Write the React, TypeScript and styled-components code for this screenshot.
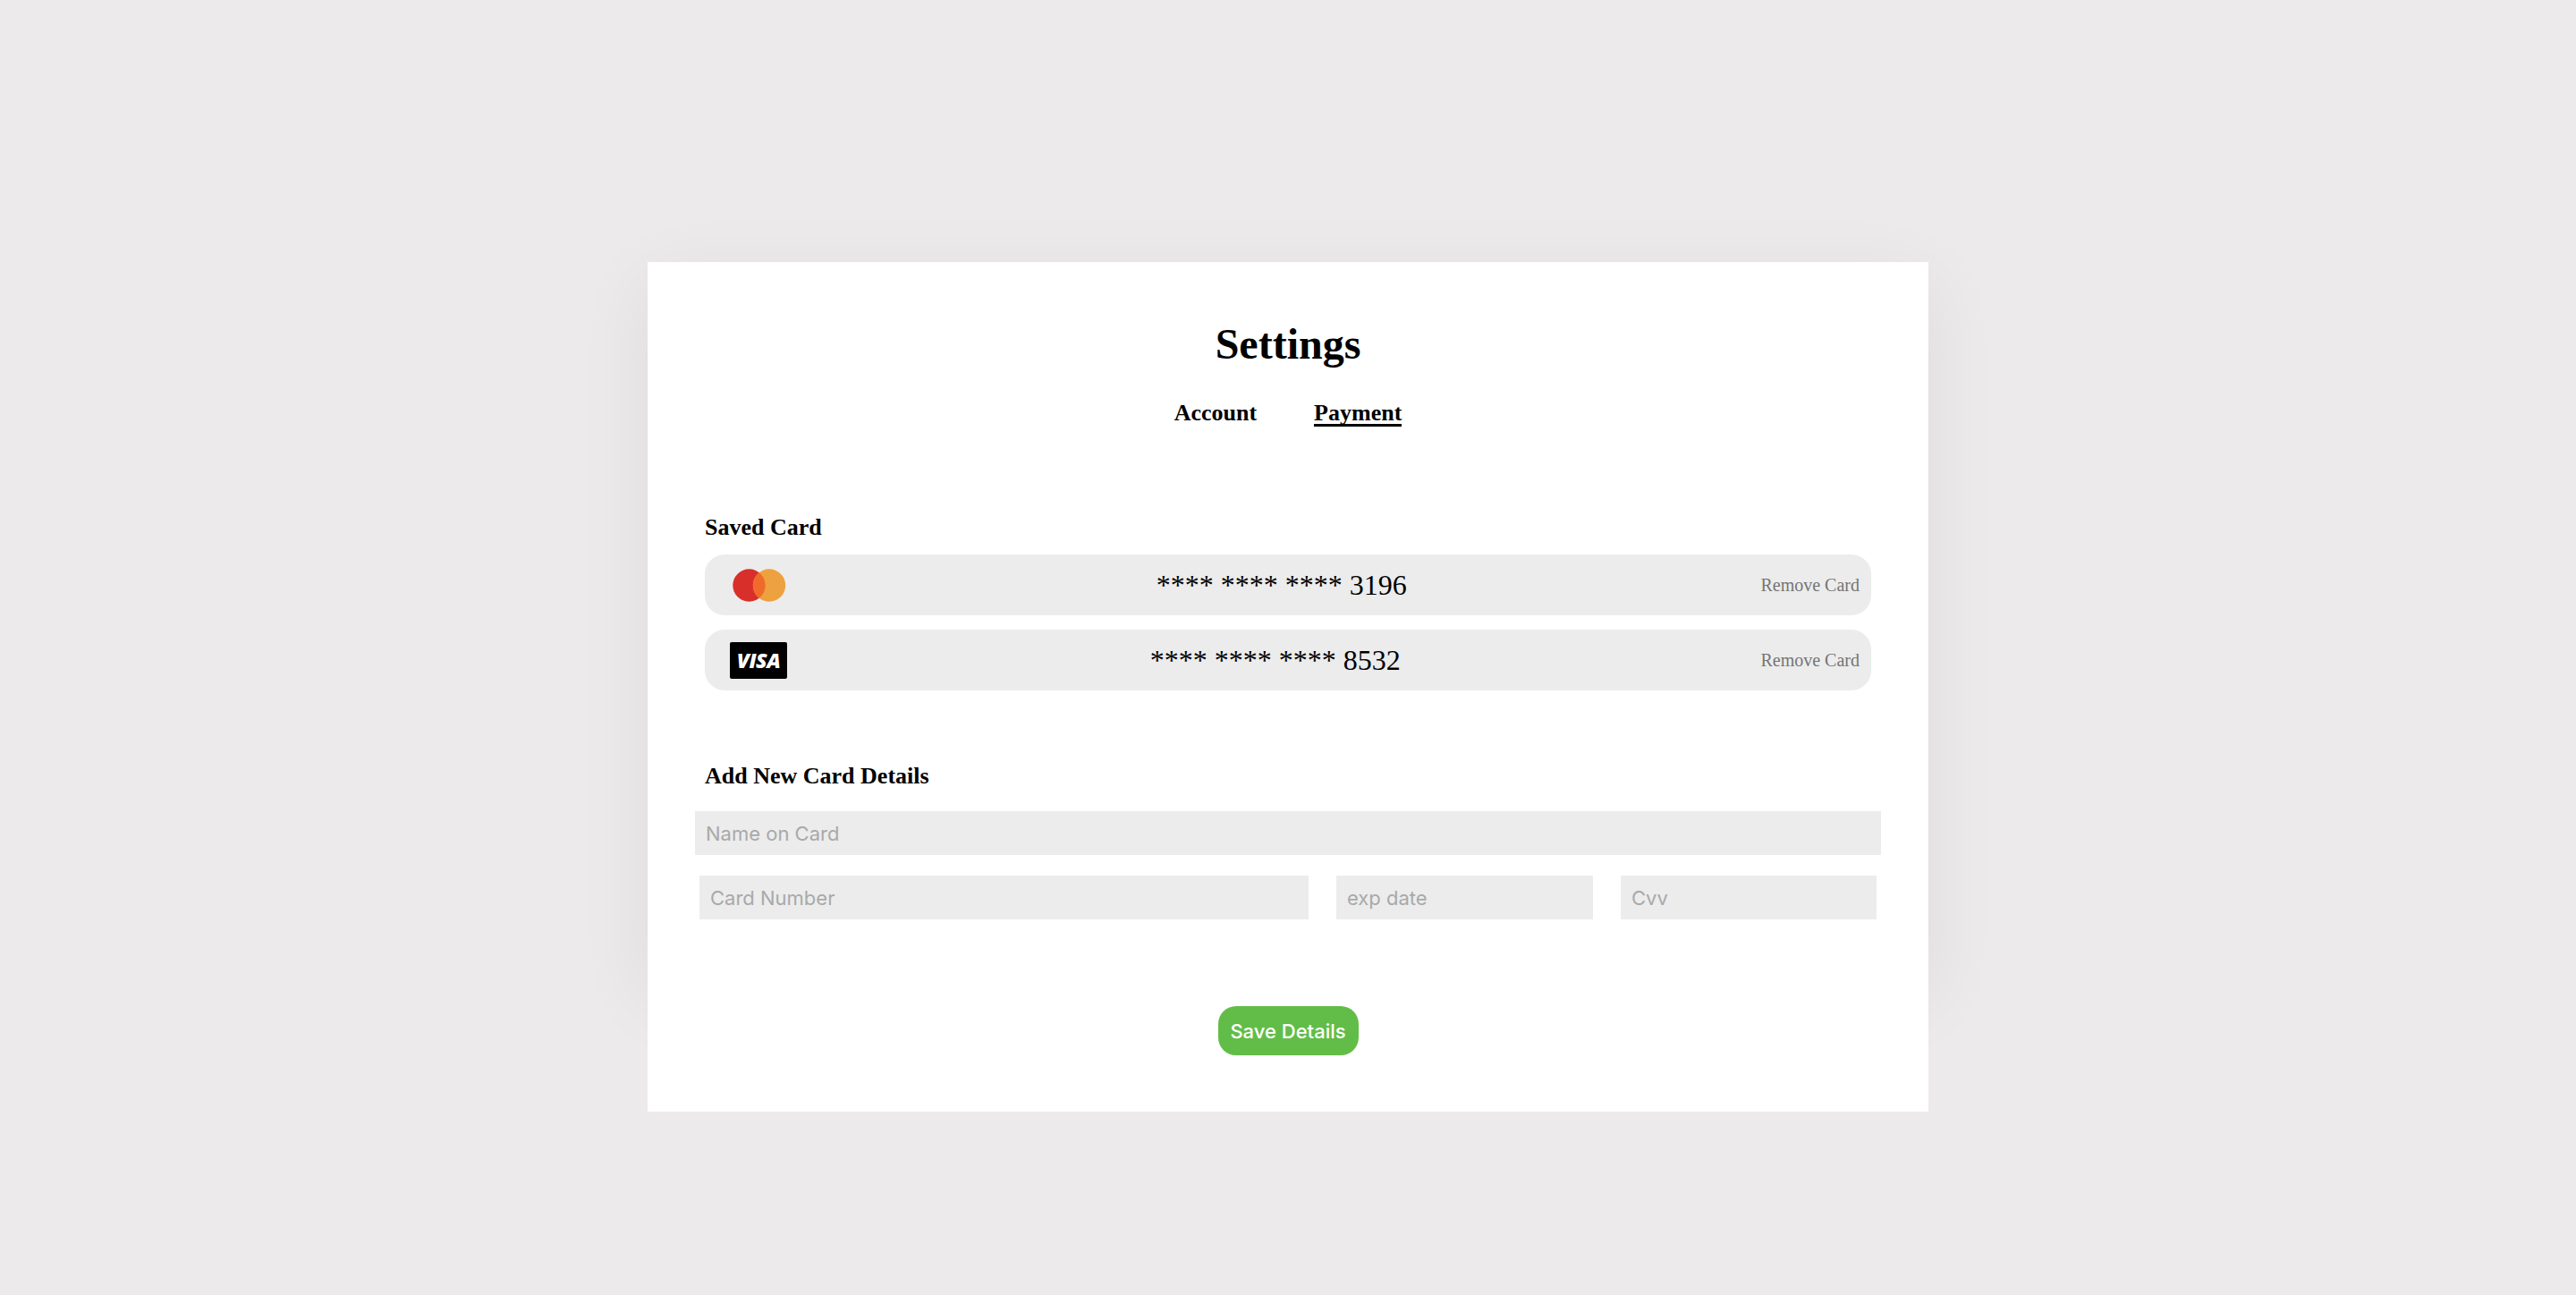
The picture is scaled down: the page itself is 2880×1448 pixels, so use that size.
import styled, { createGlobalStyle } from "styled-components";

const GlobalStyle = createGlobalStyle`
  html, body {
    margin: 0;
    padding: 0;
    background-color: #eceaeb;
  }
`;

const Page = styled.div`
  width: 2880px;
  height: 1448px;
  padding-top: 293px;
  box-sizing: border-box;
  display: flex;
  justify-content: center;
  align-items: flex-start;
  overflow: hidden;
`;

const Card = styled.main`
  position: relative;
  isolation: isolate;
  width: 1432px;
  height: 950px;
  box-sizing: border-box;
  font-family: "Liberation Serif", "Times New Roman", serif;
  color: #000;
  display: flex;
  flex-direction: column;
  align-items: center;
  padding-top: 64px;

  /* the shadow stops short of the card's bottom edge */
  &::before {
    content: "";
    position: absolute;
    z-index: -2;
    left: 0;
    right: 0;
    top: 0;
    height: 807px;
    box-shadow: 0 20px 80px rgba(0, 0, 0, 0.065);
  }

  &::after {
    content: "";
    position: absolute;
    z-index: -1;
    inset: 0;
    background-color: #fff;
  }
`;

const Title = styled.h1`
  margin: 0;
  font-size: 48px;
  line-height: 55px;
  font-weight: 700;
`;

const Tabs = styled.nav`
  display: flex;
  gap: 64px;
  margin-top: 38px;
`;

const Tab = styled.a<{ $active?: boolean }>`
  font-size: 26px;
  line-height: 24px;
  font-weight: 700;
  border-bottom: 3px solid ${(p) => (p.$active ? "#000" : "transparent")};
`;

const Section = styled.section`
  width: 1304px;
  display: flex;
  flex-direction: column;
`;

const SavedSection = styled(Section)`
  margin-top: 98px;
`;

const AddSection = styled(Section)`
  margin-top: 81px;
`;

const SectionTitle = styled.h2`
  margin: 0;
  font-size: 26px;
  line-height: 30px;
  font-weight: 700;
`;

const CardList = styled.div`
  display: flex;
  flex-direction: column;
  gap: 16px;
  margin-top: 15px;
`;

const CardRow = styled.div`
  height: 68px;
  box-sizing: border-box;
  padding: 0 13px;
  background-color: #ececec;
  border-radius: 22px;
  display: flex;
  align-items: center;
  justify-content: space-between;
`;

const LogoBox = styled.div<{ $width: number; $inset?: number }>`
  width: ${(p) => p.$width}px;
  box-sizing: border-box;
  padding-left: ${(p) => p.$inset ?? 0}px;
  display: flex;
  justify-content: ${(p) => (p.$inset ? "flex-start" : "center")};
`;

const VisaLogo = styled.div`
  width: 64px;
  height: 41px;
  background-color: #000;
  border-radius: 2px;
  color: #fff;
  font-family: "Open Sans", "Liberation Sans", sans-serif;
  font-size: 23px;
  font-weight: 800;
  font-style: italic;
  letter-spacing: -0.5px;
  display: flex;
  align-items: center;
  justify-content: center;
`;

const CardNumber = styled.span`
  font-size: 32px;
  line-height: 37px;
`;

const RemoveLink = styled.a`
  font-size: 20px;
  line-height: 23px;
  color: #757575;
`;

const Form = styled.form`
  display: flex;
  flex-direction: column;
  gap: 23px;
  margin: 24px -11px 0;
`;

const FieldRow = styled.div`
  display: flex;
  gap: 31px;
  padding: 0 5px;
`;

const Field = styled.input<{ $width?: number }>`
  width: ${(p) => (p.$width ? `${p.$width}px` : "100%")};
  height: 49px;
  box-sizing: border-box;
  padding: 1px 12px 0;
  border: none;
  outline: none;
  background-color: #ececec;
  font-family: Inter, "Noto Sans", sans-serif;
  font-size: 22px;

  &::placeholder {
    color: #a9a9a9;
    opacity: 1;
  }
`;

const SaveButton = styled.button`
  width: 157px;
  height: 55px;
  margin-top: 97px;
  padding: 0;
  border: none;
  border-radius: 20px;
  background-color: #62bd48;
  color: #fff;
  font-family: Inter, "Noto Sans", sans-serif;
  font-size: 22px;
  font-weight: 500;
`;

const MastercardLogo = () => (
  <svg width="60" height="37" viewBox="0 0 60 37">
    <circle cx="18.5" cy="18.5" r="18.2" fill="#d92f2b" />
    <circle cx="41" cy="18.5" r="18.2" fill="#eda23f" />
    <path
      d="M29.75 4.2a18.2 18.2 0 0 1 0 28.6a18.2 18.2 0 0 1 0-28.6z"
      fill="#f06b2b"
    />
  </svg>
);

const App = () => {
  return (
    <Page>
      <GlobalStyle />
      <Card>
        <Title>Settings</Title>
        <Tabs>
          <Tab>Account</Tab>
          <Tab $active>Payment</Tab>
        </Tabs>

        <SavedSection>
          <SectionTitle>Saved Card</SectionTitle>
          <CardList>
            <CardRow>
              <LogoBox $width={96}>
                <MastercardLogo />
              </LogoBox>
              <CardNumber>**** **** **** 3196</CardNumber>
              <RemoveLink>Remove Card</RemoveLink>
            </CardRow>
            <CardRow>
              <LogoBox $width={82} $inset={15}>
                <VisaLogo>VISA</VisaLogo>
              </LogoBox>
              <CardNumber>**** **** **** 8532</CardNumber>
              <RemoveLink>Remove Card</RemoveLink>
            </CardRow>
          </CardList>
        </SavedSection>

        <AddSection>
          <SectionTitle>Add New Card Details</SectionTitle>
          <Form>
            <Field placeholder="Name on Card" />
            <FieldRow>
              <Field $width={681} placeholder="Card Number" />
              <Field $width={287} placeholder="exp date" />
              <Field $width={286} placeholder="Cvv" />
            </FieldRow>
          </Form>
        </AddSection>

        <SaveButton type="button">Save Details</SaveButton>
      </Card>
    </Page>
  );
};

export default App;
